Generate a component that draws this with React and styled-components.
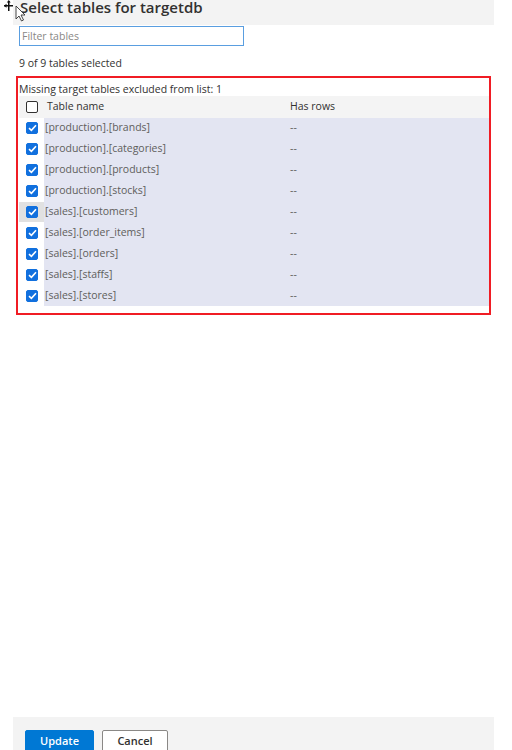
import React from "react";
import styled, { createGlobalStyle } from "styled-components";

const GlobalStyle = createGlobalStyle`
  html, body {
    margin: 0;
    padding: 0;
    overflow: hidden;
    background: #fff;
  }
  * {
    box-sizing: border-box;
  }
`;

const Page = styled.div`
  position: relative;
  width: 512px;
  height: 762px;
  display: flex;
  flex-direction: column;
  padding-left: 13px;
  padding-right: 18px;
  font-family: "Open Sans", "Noto Sans", sans-serif;
  color: #323130;
`;

const Header = styled.div`
  height: 25px;
  background: #f3f3f3;
  padding-left: 7px;
`;

const Title = styled.h1`
  margin: 0;
  font-size: 15px;
  line-height: 15px;
  font-weight: 600;
  color: #323130;
`;

const Body = styled.div`
  flex: 1;
  display: flex;
  flex-direction: column;
  padding: 1px 3px 0 3px;
`;

const FilterInput = styled.input`
  margin-left: 3px;
  width: 225px;
  height: 20px;
  border: 1px solid #5a9ee0;
  outline: none;
  padding: 0 2px;
  font-family: inherit;
  font-size: 10.5px;
  color: #323130;
  &::placeholder {
    color: #8a8886;
  }
`;

const SelectedCount = styled.div`
  margin: 10px 0 0 3px;
  font-size: 10.5px;
  line-height: 14px;
  color: #323130;
`;

const Outline = styled.div`
  margin-top: 6px;
  border: 2px solid #f01c24;
  padding: 4px 0 7px 1px;
  height: 239px;
`;

const Note = styled.div`
  font-size: 10.5px;
  line-height: 14px;
  color: #323130;
`;

const Grid = styled.div`
  display: flex;
  flex-direction: column;
`;

const Row = styled.div`
  display: grid;
  grid-template-columns: 25px 245px 1fr;
  height: ${(p) => (p.$head ? 22 : 20.9)}px;
  background: ${(p) => (p.$head ? "#f4f4f4" : "transparent")};
  font-size: 10.5px;
  color: ${(p) => (p.$head ? "#323130" : "#605e5c")};
`;

const CheckCell = styled.div`
  display: flex;
  align-items: center;
  justify-content: center;
  padding-left: 1px;
  background: ${(p) => (p.$hover ? "#e1e1e1" : "transparent")};
`;

const Cell = styled.div`
  display: flex;
  align-items: center;
  padding-left: ${(p) => (p.$head ? 3 : 1)}px;
  padding-bottom: 2px;
  background: ${(p) => (p.$selected ? "#e3e5f2" : "transparent")};
  white-space: nowrap;
`;

const Box = styled.span`
  width: 12px;
  height: 12px;
  border-radius: 2px;
  display: flex;
  align-items: center;
  justify-content: center;
  background: ${(p) => (p.$checked ? "#1170de" : "#fff")};
  border: 1px solid ${(p) => (p.$checked ? "#1170de" : "#323130")};
`;

const Footer = styled.div`
  height: 45px;
  background: #f3f3f3;
  display: flex;
  gap: 8px;
  padding: 13px 0 0 12px;
`;

const Button = styled.button`
  height: 24px;
  width: ${(p) => p.$w}px;
  font-family: inherit;
  font-size: 11px;
  font-weight: 600;
  padding: 0 0 3px;
  border-radius: 2px;
  border: 1px solid ${(p) => (p.$primary ? "#0078d4" : "#8a8886")};
  background: ${(p) => (p.$primary ? "#0078d4" : "#fff")};
  color: ${(p) => (p.$primary ? "#fff" : "#323130")};
`;

const Cursor = styled.svg`
  position: absolute;
  left: 4px;
  top: 0;
`;

const Check = () => (
  <svg width="9" height="8" viewBox="0 0 9 8">
    <path d="M1 4.2 L3.4 6.4 L8 1.2" fill="none" stroke="#fff" strokeWidth="1.6" />
  </svg>
);

const Checkbox = ({ checked }) => <Box $checked={checked}>{checked && <Check />}</Box>;

const tables = [
  "[production].[brands]",
  "[production].[categories]",
  "[production].[products]",
  "[production].[stocks]",
  "[sales].[customers]",
  "[sales].[order_items]",
  "[sales].[orders]",
  "[sales].[staffs]",
  "[sales].[stores]",
];

export default function App() {
  return (
    <Page>
      <GlobalStyle />
      <Cursor width="24" height="22" viewBox="0 0 24 22">
        <g fill="#111">
          <rect x="4" y="1" width="1.5" height="10" />
          <rect x="0" y="5" width="9" height="1.5" />
          <path d="M4.75 0 L2.8 2.5 L6.7 2.5 Z" />
          <path d="M0 5.75 L2.5 3.8 L2.5 7.7 Z" />
        </g>
        <path
          d="M12 6 L12 19 L15 16 L17.5 21 L19.5 20 L17 15 L21 15 Z"
          fill="#fff"
          stroke="#333"
          strokeWidth="0.9"
        />
      </Cursor>
      <Header>
        <Title>Select tables for targetdb</Title>
      </Header>
      <Body>
        <FilterInput placeholder="Filter tables" />
        <SelectedCount>9 of 9 tables selected</SelectedCount>
        <Outline>
          <Note>Missing target tables excluded from list: 1</Note>
          <Grid>
            <Row $head>
              <CheckCell>
                <Checkbox checked={false} />
              </CheckCell>
              <Cell $head>Table name</Cell>
              <Cell>Has rows</Cell>
            </Row>
            {tables.map((name) => (
              <Row key={name}>
                <CheckCell $hover={name === "[sales].[customers]"}>
                  <Checkbox checked />
                </CheckCell>
                <Cell $selected>{name}</Cell>
                <Cell $selected>--</Cell>
              </Row>
            ))}
          </Grid>
        </Outline>
      </Body>
      <Footer>
        <Button $primary $w={69}>Update</Button>
        <Button $w={66}>Cancel</Button>
      </Footer>
    </Page>
  );
}
